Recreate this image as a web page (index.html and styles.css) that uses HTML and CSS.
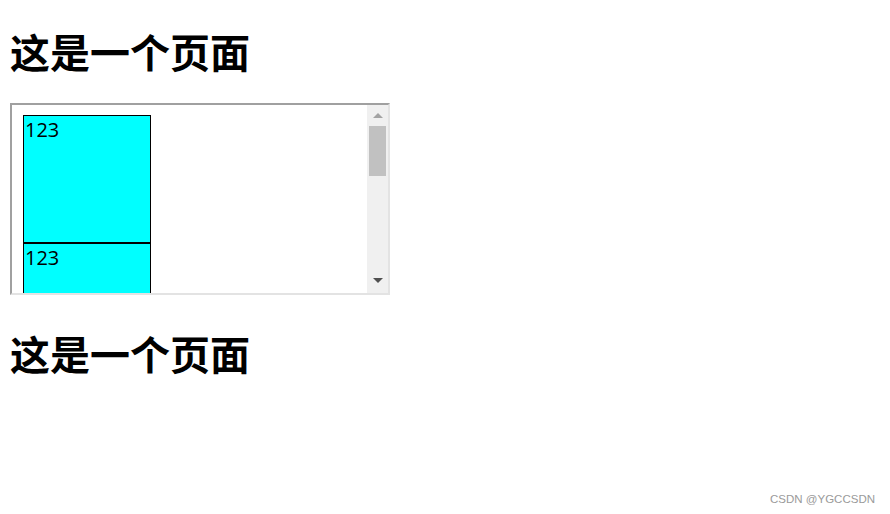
FILE: index.html
```html
<!DOCTYPE html>
<html lang="zh-CN">
<head>
<meta charset="utf-8">
<title>这是一个页面</title>
<link rel="stylesheet" href="styles.css">
</head>
<body>
<h1 class="title">这是一个页面</h1>
<div class="frame">
  <div class="viewport">
    <div class="cell">123</div>
    <div class="cell">123</div>
  </div>
  <div class="scrollbar">
    <div class="btn"><span class="tri up"></span></div>
    <div class="track"><div class="thumb"></div></div>
    <div class="btn"><span class="tri down"></span></div>
  </div>
</div>
<h1 class="title">这是一个页面</h1>
<div class="watermark">CSDN @YGCCSDN</div>
</body>
</html>
```
FILE: styles.css
```css
html, body {
  background: #ffffff;
}
body {
  margin: 0;
  padding: 0 10px;
  font-family: "Open Sans", "Noto Sans CJK SC", sans-serif;
  color: #000;
}
.title {
  font-family: "Noto Sans CJK SC", "Noto Sans", sans-serif;
  font-weight: 700;
  font-size: 40px;
  line-height: 49px;
  margin: 27px 0;
}
.frame {
  width: 380px;
  height: 192px;
  box-sizing: border-box;
  border: 2px solid;
  border-color: #a0a0a0 #e3e3e3 #e3e3e3 #a0a0a0;
  display: flex;
  margin-bottom: 34px;
}
.viewport {
  flex: 1;
  overflow: hidden;
  padding: 10px 0 0 11px;
}
.cell {
  width: 128px;
  height: 128px;
  box-sizing: border-box;
  border: 1px solid #000;
  background: #00ffff;
  font-family: "Open Sans", sans-serif;
  font-size: 20px;
  line-height: 27px;
  padding-left: 1px;
}
.scrollbar {
  width: 21px;
  background: #f0f0f0;
  display: flex;
  flex-direction: column;
}
.btn {
  height: 21px;
  display: flex;
  align-items: center;
  justify-content: center;
}
.tri {
  width: 0;
  height: 0;
  border-left: 5px solid transparent;
  border-right: 5px solid transparent;
}
.tri.up {
  border-bottom: 5px solid #a3a3a3;
}
.tri.down {
  border-top: 5px solid #505050;
  margin-top: -4px;
}
.track {
  flex: 1;
  padding: 0 2px;
}
.thumb {
  height: 50px;
  background: #c1c1c1;
}
.watermark {
  position: absolute;
  top: 493px;
  right: 15px;
  font-family: "Liberation Sans", Arial, sans-serif;
  font-size: 11.5px;
  line-height: 12px;
  color: #9a9a9a;
}
```
